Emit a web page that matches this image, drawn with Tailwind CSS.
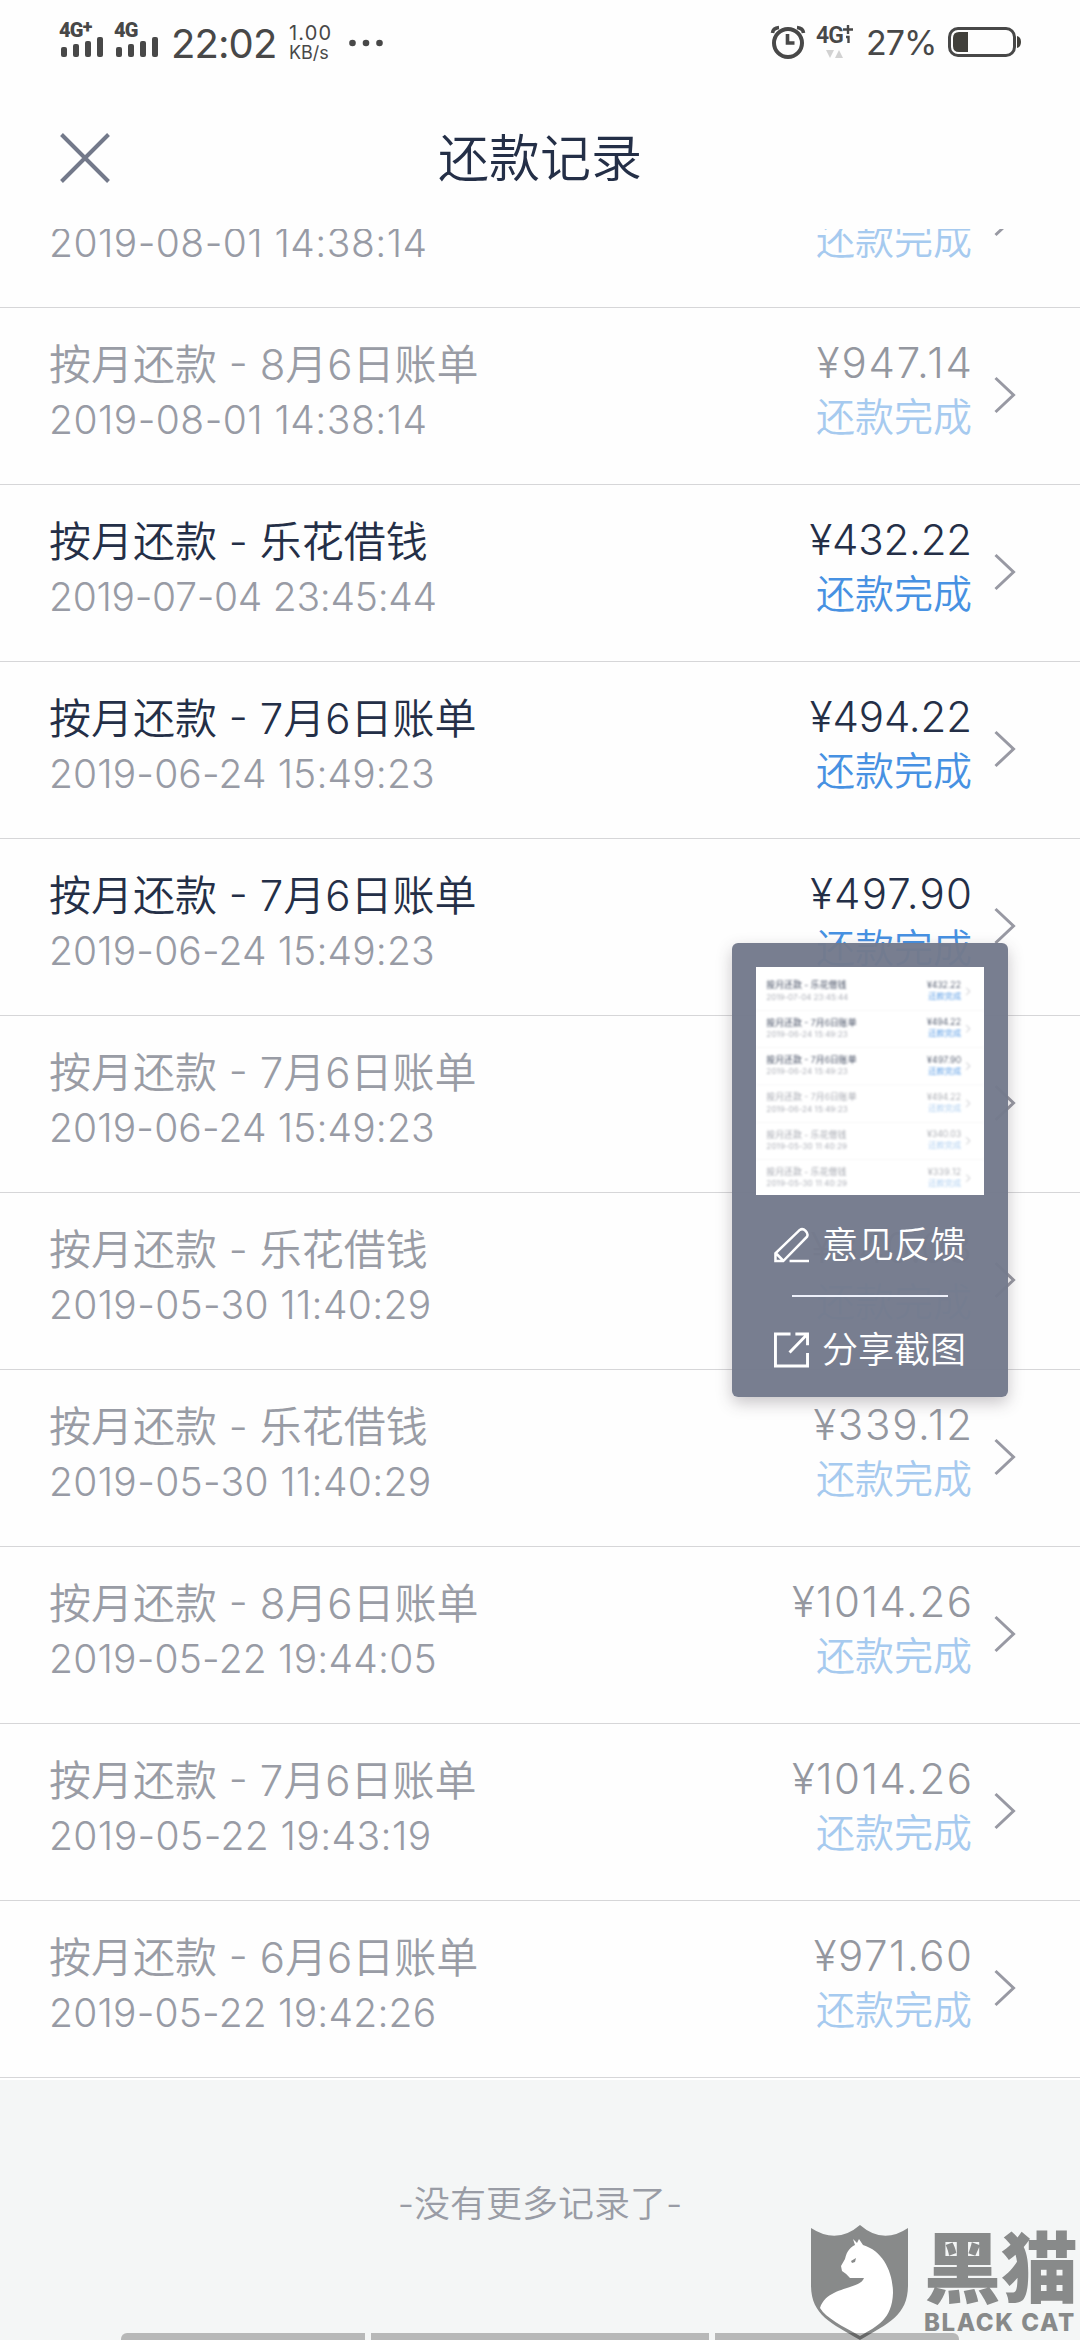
<!DOCTYPE html>
<html lang="zh-CN">
<head>
<meta charset="utf-8">
<title>还款记录</title>
<script src="https://cdn.jsdelivr.net/npm/@tailwindcss/browser@4"></script>
</head>
<body class="relative flex h-[2340px] w-[1080px] flex-col overflow-hidden bg-[#fefefe] font-['Inter','Noto_Sans_CJK_SC',sans-serif]">

<!-- status bar -->
<header class="relative z-10 h-[229px] shrink-0 bg-[#fefefe] text-[#484848]">
  <div class="flex h-[84px] items-start pl-[59px] pr-[58px]">
    <div class="w-[55px] pt-[19px]">
      <div class="h-[18px] whitespace-nowrap font-['Roboto'] text-[20px] leading-[22px] font-black tracking-[-0.8px]">4G<span class="relative -top-[4px] text-[18px]">+</span></div>
      <svg class="block" width="46" height="22" viewBox="0 0 46 22" fill="currentColor"><rect x="2" y="10" width="6" height="10" rx="2"/><rect x="14" y="7" width="6" height="13" rx="2"/><rect x="26" y="4" width="6" height="16" rx="2"/><rect x="38" y="0" width="6" height="20" rx="2"/></svg>
    </div>
    <div class="w-[57px] pt-[19px]">
      <div class="h-[18px] font-['Roboto'] text-[20px] leading-[22px] font-black tracking-[-0.8px]">4G</div>
      <svg class="block" width="46" height="22" viewBox="0 0 46 22" fill="currentColor"><rect x="2" y="10" width="6" height="10" rx="2"/><rect x="14" y="7" width="6" height="13" rx="2"/><rect x="26" y="4" width="6" height="16" rx="2"/><rect x="38" y="0" width="6" height="20" rx="2"/></svg>
    </div>
    <div class="w-[118px] pt-[22px] text-[40px] leading-[44px] tracking-[-0.9px]">22:02</div>
    <div class="w-[60px] pt-[23px] text-[20px] leading-[20px]"><div class="tracking-[1.2px]">1.00</div><div class="text-[18px]">KB/s</div></div>
    <svg class="mt-[39px]" width="34" height="8" viewBox="0 0 34 8" fill="currentColor"><circle cx="3.5" cy="4" r="3.3"/><circle cx="17" cy="4" r="3.3"/><circle cx="30.500" cy="4" r="3.3"/></svg>
    <div class="ml-auto flex items-start">
      <svg class="mt-[24px]" width="36" height="36" viewBox="0 0 36 36" fill="none" stroke="currentColor"><circle cx="18" cy="19" r="14" stroke-width="4"/><path d="M17.500 10v9h7" stroke-width="3.600"/><path d="M2.500 9Q3 4 9 3.500M33.500 9Q33 4 27 3.500" stroke-width="3.600"/></svg>
      <div class="ml-[10px] w-[50px] pt-[24px]">
        <div class="relative h-[25px] font-['Roboto'] text-[23px] leading-[24px] font-semibold tracking-[-1px]">4G<svg class="absolute left-[27px] top-[1px]" width="10" height="20" viewBox="0 0 10 20" fill="none" stroke="currentColor" stroke-width="2.400"><path d="M0 4.500h10M5 0v9M3 12h2.500v6"/></svg></div>
        <svg class="ml-[10px] block" width="18" height="10" viewBox="0 0 18 10" fill="#d2d2d2"><path d="M0 1h8L4 9zM9 9h8L13 1z"/></svg>
      </div>
      <div class="w-[82px] pt-[21px] text-[34px] leading-[43px] tracking-[-1px]">27%</div>
      <svg class="mt-[26px]" width="74" height="32" viewBox="0 0 74 32"><rect x="1.500" y="2.500" width="65" height="27" rx="8.500" fill="none" stroke="#484848" stroke-width="3"/><path d="M20 6v20h-9q-6 0-6-6v-8q0-6 6-6z" fill="#41403b"/><path d="M69 10q4 1 4 6t-4 6z" fill="#41403b"/></svg>
    </div>
  </div>
  <!-- title bar -->
  <div class="relative flex h-[150px] items-center justify-center">
    <svg class="absolute left-[60px] top-[49px]" width="50" height="50" viewBox="0 0 50 50" fill="none" stroke="#73798a" stroke-width="4"><path d="M1.500 1.500l47 47M48.500 1.500l-47 47"/></svg>
    <h1 class="text-[51px] font-[350] text-[#242f47]">还款记录</h1>
  </div>
</header>

<main id="list" class="-mt-[98px] shrink-0"></main>

<footer class="flex grow flex-col items-center border-t-2 border-white bg-[#f4f6f6] pt-[98px]">
  <p class="text-[36px] leading-[52px] font-[350] text-[#999ca5]">-没有更多记录了-</p>
</footer>

<!-- screenshot popup -->
<aside class="absolute left-[732px] top-[943px] flex h-[454px] w-[276px] flex-col items-center rounded-[6px] bg-[#747a8c]/97 pt-[24px] text-white shadow-[0_6px_16px_rgba(60,50,60,0.28)]">
  <div class="h-[228px] w-[228px] shrink-0 overflow-hidden bg-white">
    <div id="mini" class="mt-[6px] w-[1080px] origin-top-left scale-[0.2111] blur-[5px]"></div>
  </div>
  <div class="flex h-[100px] w-[192px] shrink-0 items-center gap-[13px]">
    <svg width="36" height="36" viewBox="0 0 36 36" fill="none" stroke="currentColor" stroke-width="2.600"><path d="M1.500 34.500v-8L26.500 2.500q3-2 6 1t1.500 6L9.500 34.500zM2 26.500l7.500 7.500M16 34.500h20"/></svg>
    <span class="text-[36px] leading-[52px] font-[350] whitespace-nowrap">意见反馈</span>
  </div>
  <div class="h-[2px] w-[156px] shrink-0 bg-[#edf0fa]"></div>
  <div class="mt-[3px] flex h-[100px] w-[192px] shrink-0 items-center gap-[13px]">
    <svg width="36" height="36" viewBox="0 0 36 36" fill="none" stroke="currentColor" stroke-width="3"><path d="M17 1.500H1.500v33h33V21M22 1.500h12.500V13M33 3L16 20.500"/></svg>
    <span class="text-[36px] leading-[52px] font-[350] whitespace-nowrap">分享截图</span>
  </div>
</aside>

<!-- watermark -->
<div class="absolute left-[811px] top-[2225px] flex text-[#888a8a]">
  <svg width="98" height="115" viewBox="0 0 98 115"><path d="M0 3Q26 20 49 0Q72 20 97 3V60C97 90 78 98 49 115C20 98 0 90 0 60Z" fill="currentColor"/><path d="M42 14L46 18L48 14L52 20C72 26 82 47 82 68C81 94 67 101 49 111C31 101 15 93 9 83C16 61 49 65 53 53H39Q36 49 31 46L30 41L34 34C36 25 40 22 44 20Z" fill="#fff"/><path d="M40 36l5-3-1 4-3 1z" fill="currentColor"/></svg>
  <div class="ml-[15px] flex flex-col">
    <div class="h-[88px] text-[77px] leading-[88px] font-black whitespace-nowrap">黑猫</div>
    <div class="text-[24px] leading-[20px] font-extrabold tracking-[1.600px] whitespace-nowrap">BLACK CAT</div>
  </div>
</div>

<!-- navigation hints -->
<div class="absolute left-[121px] top-[2333px] flex h-[7px] gap-[6px]">
  <i class="w-[244px] rounded-tl-[6px] bg-black/25"></i>
  <i class="w-[338px] bg-black/25"></i>
  <i class="w-[244px] rounded-tr-[6px] bg-black/25"></i>
</div>

<script>
// name, time, amount, active, time letter spacing, amount letter spacing
const rows = [
  ['8月6日账单', '2019-08-01 14:38:14', '947.14', 0, 0.46, 1.9],
  ['8月6日账单', '2019-08-01 14:38:14', '947.14', 0, 0.46, 1.9],
  ['乐花借钱', '2019-07-04 23:45:44', '432.22', 1, -0.28, -0.2],
  ['7月6日账单', '2019-06-24 15:49:23', '494.22', 1, 0.13, -0.1],
  ['7月6日账单', '2019-06-24 15:49:23', '497.90', 1, 0.13, 1.2],
  ['7月6日账单', '2019-06-24 15:49:23', '494.22', 0, 0.13, -0.1],
  ['乐花借钱', '2019-05-30 11:40:29', '340.03', 0, 0.33, 0],
  ['乐花借钱', '2019-05-30 11:40:29', '339.12', 0, 0.33, 1.7],
  ['8月6日账单', '2019-05-22 19:44:05', '1014.26', 0, 0.2, 1.5],
  ['7月6日账单', '2019-05-22 19:43:19', '1014.26', 0, 0.42, 1.5],
  ['6月6日账单', '2019-05-22 19:42:26', '971.60', 0, 0.2, 1.5],
];
const row = ([name, time, sum, active, ts, as]) => `
<div class="flex h-[177px] items-start border-b border-[#d6d6d8] pl-[49px] pr-[64px] font-light whitespace-nowrap">
  <div class="pt-[29px]">
    <div class="text-[42px] leading-[56px] font-[350] ${active ? 'text-[#242f47]' : 'text-[#999ca5]'}">按月还款 - ${name}</div>
    <div class="text-[39px] leading-[54px] text-[#989ba5]" style="letter-spacing:${ts}px">${time}</div>
  </div>
  <div class="ml-auto pt-[27px] text-right">
    <div class="text-[42px] leading-[55px] ${active ? 'text-[#242f47]' : 'text-[#94979f]'}" style="letter-spacing:${as}px;margin-right:${-as}px">¥${sum}</div>
    <div class="text-[39px] leading-[53px] font-[350] ${active ? 'text-[#4791e2]' : 'text-[#a6caef]'}">还款完成</div>
  </div>
  <svg class="ml-[22px] mt-[68px]" width="22" height="38" viewBox="0 0 22 38" fill="none" stroke="#9899a3" stroke-width="3"><path d="M1.500 2L19.500 19L1.500 36"/></svg>
</div>`;
document.getElementById('list').innerHTML = rows.map(row).join('');
document.getElementById('mini').innerHTML = rows.slice(2, 8).map(row).join('');
</script>
</body>
</html>
